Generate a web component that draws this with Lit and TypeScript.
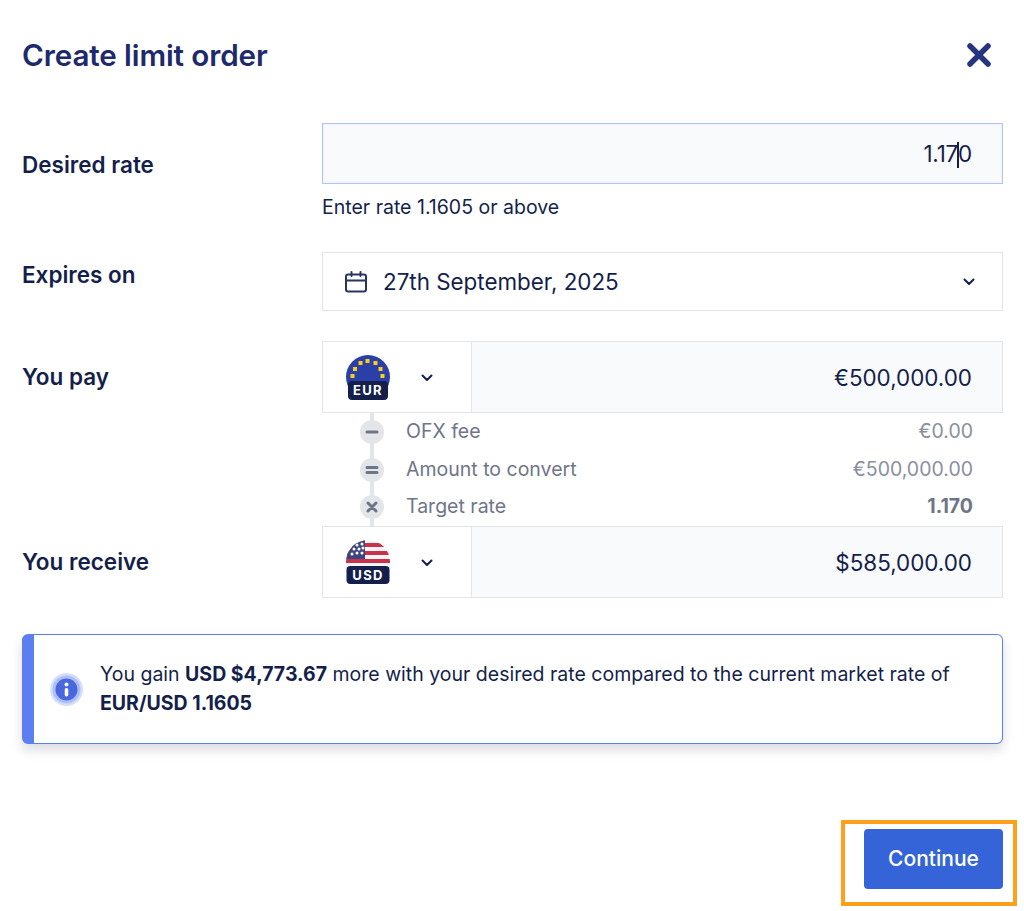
import { LitElement, html, css, svg } from "lit";
import { customElement } from "lit/decorators.js";

const chevron = html`<svg class="chev" viewBox="0 0 12 8" width="12" height="8"><path d="M1.5 1.5 6 6l4.5-4.5" fill="none" stroke="#141f4b" stroke-width="2" stroke-linecap="round" stroke-linejoin="round"/></svg>`;

function eurFlag() {
  return html`<svg class="flag" viewBox="0 0 44 44" width="44" height="44">
    <circle cx="22" cy="22" r="22" fill="#2c3fa8"/>
    ${[[6.5,21],[9,14],[14.5,8],[21.5,6],[29.5,8],[34.5,14],[36.5,21]].map(([x,y]) => svg`<rect x="${x-2}" y="${y-2}" width="4" height="4" fill="#f7d117"/>`)}
  </svg>`;
}

function usdFlag() {
  const stripes = [3,11,19,27,35];
  return html`<svg class="flag" viewBox="0 0 44 44" width="44" height="44">
    <defs><clipPath id="c"><circle cx="22" cy="22" r="22"/></clipPath></defs>
    <g clip-path="url(#c)">
      <rect width="44" height="44" fill="#f4f4f6"/>
      ${stripes.map(y => svg`<rect x="0" y="${y}" width="44" height="4" fill="#c8324a"/>`)}
      <rect x="0" y="0" width="19" height="19" fill="#3d4580"/>
      ${[[6,14],[11,13],[16,13],[8,9],[13,9],[17,8],[11,5],[16,4]].map(([x,y]) => svg`<circle cx="${x}" cy="${y}" r="1.5" fill="#fff"/>`)}
    </g>
  </svg>`;
}

@customElement("app-root")
export class AppRoot extends LitElement {
  static styles = css`
    :host {
      display: block;
      box-sizing: border-box;
      height: 911px;
      padding: 0 21px 0 22px;
      background: #fff;
      font-family: Inter, "Liberation Sans", sans-serif;
      color: #141f4b;
      overflow: hidden;
    }
    * { box-sizing: border-box; }
    .head {
      display: flex;
      justify-content: space-between;
      align-items: center;
      height: 111px;
      padding-right: 12px;
    }
    h1 {
      margin: -2px 0 0;
      font-size: 29.6px;
      font-weight: 600;
      color: #1d2a6b;
      letter-spacing: -0.1px;
    }
    .close { display: block; margin-top: -2px; }
    .row {
      display: grid;
      grid-template-columns: 300px 1fr;
      align-items: start;
    }
    .label {
      font-size: 22.5px;
      font-weight: 600;
      line-height: 28px;
    }
    .rate-row { margin-top: 12px; }
    .rate-row .label { padding-top: 28px; }
    .rate-input {
      height: 61px;
      background: #f9fafc;
      border: 1px solid #b3c3f3;
      box-shadow: inset 0 0 2px rgba(90,120,230,.15);
      display: flex;
      align-items: center;
      justify-content: flex-end;
      padding-right: 30px;
      font-size: 22.4px;
      letter-spacing: -0.2px;
    }
    .caret {
      display: inline-block;
      width: 2px;
      height: 26px;
      background: #141f4b;
      margin: 0 -1px;
      vertical-align: -6px;
    }
    .hint {
      font-size: 19.5px;
      line-height: 24px;
      margin-top: 11px;
    }
    .date-row { margin-top: 33px; }
    .date-row .label { padding-top: 9px; }
    .date {
      height: 59px;
      border: 1px solid #e4e5e8;
      display: flex;
      align-items: center;
      padding: 0 27px 0 21px;
      font-size: 22.4px;
    }
    .date svg.cal { margin-right: 15px; }
    .date .chev { margin-left: auto; }
    .pay-row { margin-top: 30px; }
    .pay-row .label { padding-top: 22px; }
    .money {
      height: 72px;
      border: 1px solid #e4e5e8;
      display: flex;
    }
    .cur {
      width: 149px;
      flex: none;
      border-right: 1px solid #e4e5e8;
      display: flex;
      align-items: center;
      padding-left: 23px;
    }
    .cur .chev { margin-left: 31px; margin-top: 1px; }
    .flagbox {
      position: relative;
      width: 44px;
      height: 45px;
      margin-top: 1px;
    }
    .flag { display: block; }
    .code {
      position: absolute;
      left: 50%;
      transform: translateX(-50%);
      bottom: 0;
      width: 40px;
      height: 19px;
      border-radius: 4px;
      background: #141f4b;
      color: #fff;
      font-size: 13px;
      font-weight: 700;
      letter-spacing: 1.3px;
      text-align: center;
      line-height: 19px;
    }
    .code.usd { width: 43px; bottom: 1px; height: 18px; line-height: 18px; }
    .amount {
      flex: 1;
      background: #f9fafc;
      display: flex;
      align-items: center;
      justify-content: flex-end;
      padding-right: 30px;
      font-size: 22.4px;
    }
    .steps {
      position: relative;
      margin-left: 300px;
      height: 113px;
      padding: 7px 30px 0 38px;
      color: #6f7588;
      font-size: 19.5px;
    }
    .steps::before {
      content: "";
      position: absolute;
      left: 48px;
      top: 0;
      bottom: 0;
      width: 4px;
      background: #e4e5e8;
    }
    .step {
      position: relative;
      display: flex;
      align-items: center;
      height: 24px;
      margin-bottom: 14px;
    }
    .step:last-child { margin-bottom: 0; margin-top: -1px; }
    .step span { padding-bottom: 2px; }
    .dot {
      width: 24px;
      height: 24px;
      border-radius: 50%;
      background: #e4e5e8;
      flex: none;
      margin-right: 22px;
      display: block;
    }
    .val { margin-left: auto; color: #8a8f9e; }
    .val.strong { color: #6f7588; font-weight: 700; }
    .info {
      margin-top: 36px;
      height: 110px;
      border: 1px solid #5b7ff0;
      border-left: 12px solid #5b7ff0;
      border-radius: 6px;
      box-shadow: 0 6px 12px rgba(30,40,80,.16);
      display: flex;
      align-items: center;
      padding: 0 30px 0 16px;
      font-size: 19.5px;
      line-height: 29px;
      background: #fff;
    }
    .info svg { flex: none; margin-right: 17px; }
    .info b { font-weight: 700; }
    .foot {
      display: flex;
      justify-content: flex-end;
      margin-top: 85px;
    }
    .wrap { position: relative; }
    .wrap::after {
      content: "";
      position: absolute;
      left: -23px;
      right: -14px;
      top: -9px;
      bottom: -17px;
      border: 4px solid #ff9f1c;
      pointer-events: none;
    }
    button {
      display: block;
      width: 139px;
      height: 60px;
      border: 0;
      border-radius: 4px;
      background: #3564d9;
      color: #fff;
      font: 500 21px Inter, "Liberation Sans", sans-serif;
      padding: 0 0 2px;
    }
  `;

  render() {
    return html`
      <div class="head">
        <h1>Create limit order</h1>
        <svg class="close" width="24" height="24" viewBox="0 0 24 24"><path d="M3 3l18 18M21 3 3 21" stroke="#26357f" stroke-width="5.5" stroke-linecap="round"/></svg>
      </div>

      <div class="row rate-row">
        <div class="label">Desired rate</div>
        <div>
          <div class="rate-input"><span>1.17<span class="caret"></span>0</span></div>
          <div class="hint">Enter rate 1.1605 or above</div>
        </div>
      </div>

      <div class="row date-row">
        <div class="label">Expires on</div>
        <div class="date">
          <svg class="cal" width="24" height="24" viewBox="0 0 24 24" fill="none" stroke="#2a3560" stroke-width="2" stroke-linecap="round"><rect x="2" y="4.5" width="20" height="17" rx="2"/><path d="M2 10.5h20M7.5 2v4M16.5 2v4"/></svg>
          <span>27th September, 2025</span>
          ${chevron}
        </div>
      </div>

      <div class="row pay-row">
        <div class="label">You pay</div>
        <div class="money">
          <div class="cur">
            <div class="flagbox">${eurFlag()}<span class="code">EUR</span></div>
            ${chevron}
          </div>
          <div class="amount">€500,000.00</div>
        </div>
      </div>

      <div class="steps">
        <div class="step">
          <svg class="dot" viewBox="0 0 24 24"><path d="M7 12h10" stroke="#6f7588" stroke-width="3" stroke-linecap="round"/></svg>
          <span>OFX fee</span><span class="val">€0.00</span>
        </div>
        <div class="step">
          <svg class="dot" viewBox="0 0 24 24"><path d="M7 9.5h10M7 14.5h10" stroke="#6f7588" stroke-width="3" stroke-linecap="round"/></svg>
          <span>Amount to convert</span><span class="val">€500,000.00</span>
        </div>
        <div class="step">
          <svg class="dot" viewBox="0 0 24 24"><path d="M8 8l8 8M16 8l-8 8" stroke="#6f7588" stroke-width="3" stroke-linecap="round"/></svg>
          <span>Target rate</span><span class="val strong">1.170</span>
        </div>
      </div>

      <div class="row">
        <div class="label" style="padding-top:22px">You receive</div>
        <div class="money">
          <div class="cur">
            <div class="flagbox">${usdFlag()}<span class="code usd">USD</span></div>
            ${chevron}
          </div>
          <div class="amount">$585,000.00</div>
        </div>
      </div>

      <div class="info">
        <svg width="33" height="33" viewBox="0 0 33 33">
          <circle cx="16.5" cy="16.5" r="16.5" fill="#d4dffb"/>
          <circle cx="16.5" cy="16.5" r="14" fill="#aebff6"/>
          <circle cx="16.5" cy="16.5" r="11" fill="#4a68dd"/>
          <circle cx="16.5" cy="11.5" r="2" fill="#fff"/>
          <rect x="14.7" y="15" width="3.6" height="8.5" rx="1.8" fill="#fff"/>
        </svg>
        <div>You gain <b>USD $4,773.67</b> more with your desired rate compared to the current market rate of <b>EUR/USD 1.1605</b></div>
      </div>

      <div class="foot">
        <div class="wrap"><button>Continue</button></div>
      </div>
    `;
  }
}
